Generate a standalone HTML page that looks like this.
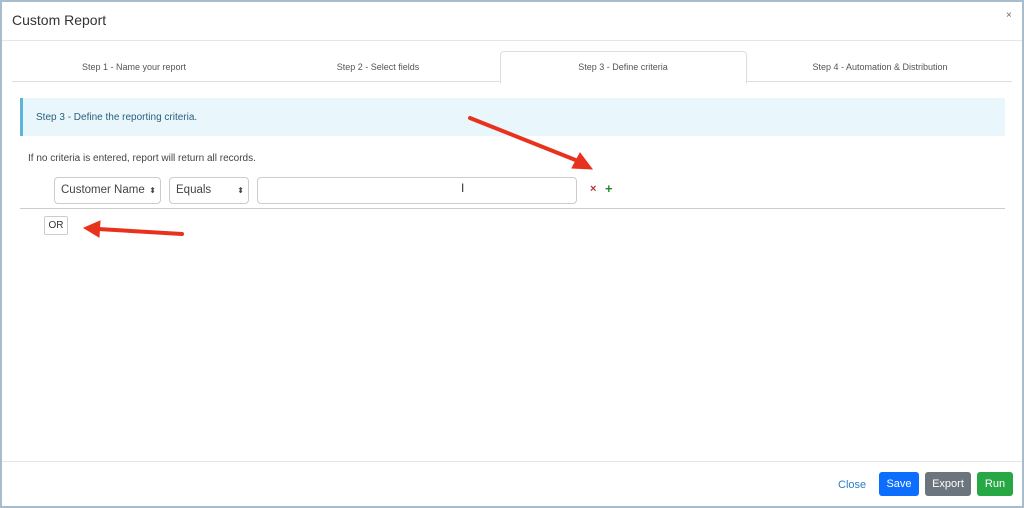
<!DOCTYPE html>
<html><head><style>
body{margin:0;width:1024px;height:508px;background:#a9bccb;font-family:"Liberation Sans",sans-serif;position:relative;overflow:hidden}
.m{position:absolute;left:2px;top:2px;width:1020px;height:504px;background:#fff}
.a{position:absolute}
.t{font-size:9px;color:#555;text-align:center;top:62px}
.btn{position:absolute;top:472px;height:24px;border-radius:3px;color:#fff;font-size:11px;line-height:25px;text-align:center}
</style></head><body>
<div class="m"></div>
<div class="a" style="left:12px;top:12px;font-size:14px;color:#333">Custom Report</div>
<div class="a" style="left:1006px;top:10px;font-size:10px;color:#666">×</div>
<div class="a" style="left:2px;top:40px;width:1020px;height:1px;background:#e5e5e5"></div>
<div class="a" style="left:12px;top:81px;width:1000px;height:1px;background:#ddd"></div>
<div class="a" style="left:500px;top:51px;width:245px;height:31px;border:1px solid #ddd;border-bottom:1px solid #fff;border-radius:4px 4px 0 0;background:#fff"></div>
<div class="a t" style="left:12px;width:244px">Step 1 - Name your report</div>
<div class="a t" style="left:256px;width:244px">Step 2 - Select fields</div>
<div class="a t" style="left:500px;width:246px">Step 3 - Define criteria</div>
<div class="a t" style="left:746px;width:268px">Step 4 - Automation &amp; Distribution</div>
<div class="a" style="left:20px;top:98px;width:982px;height:38px;background:#e9f6fb;border-left:3px solid #5bb6d8"></div>
<div class="a" style="left:36px;top:112px;font-size:10px;color:#2c5f7c">Step 3 - Define the reporting criteria.</div>
<div class="a" style="left:28px;top:153px;font-size:10px;color:#444">If no criteria is entered, report will return all records.</div>
<div class="a" style="left:54px;top:177px;width:105px;height:25px;border:1px solid #ccc;border-radius:4px;font-size:11.5px;line-height:25px;color:#444;text-indent:6px">Customer Name<span style="position:absolute;right:4px;font-size:8px">⬍</span></div>
<div class="a" style="left:169px;top:177px;width:78px;height:25px;border:1px solid #ccc;border-radius:4px;font-size:11.5px;line-height:25px;color:#444;text-indent:6px">Equals<span style="position:absolute;right:4px;font-size:8px">⬍</span></div>
<div class="a" style="left:257px;top:177px;width:318px;height:25px;border:1px solid #ccc;border-radius:4px"></div>
<div class="a" style="left:461px;top:181px;font-size:12px;color:#333">I</div>
<div class="a" style="left:590px;top:183px;font-size:11px;color:#b33;font-weight:bold">×</div>
<div class="a" style="left:605px;top:181px;font-size:13px;color:#2a8a2a;font-weight:bold">+</div>
<div class="a" style="left:20px;top:208px;width:985px;height:1px;background:#ccc"></div>
<div class="a" style="left:44px;top:216px;width:22px;height:17px;border:1px solid #ccc;border-radius:2px;font-size:10px;line-height:17px;text-align:center;color:#333">OR</div>
<div class="a" style="left:2px;top:461px;width:1020px;height:1px;background:#e5e5e5"></div>
<div class="a" style="left:838px;top:479px;font-size:11px;color:#2a7bc8">Close</div>
<div class="btn" style="left:879px;width:40px;background:#0d6efd">Save</div>
<div class="btn" style="left:925px;width:46px;background:#6c757d">Export</div>
<div class="btn" style="left:977px;width:36px;background:#28a745">Run</div>
<svg class="a" style="left:0;top:0" width="1024" height="508">
<g fill="#e8321e" stroke="#e8321e">
<line x1="470" y1="118" x2="578" y2="161" stroke-width="4" stroke-linecap="round"/>
<polygon points="592,169 572,168 580,153" stroke-width="1"/>
<line x1="182" y1="234" x2="98" y2="229" stroke-width="4" stroke-linecap="round"/>
<polygon points="84,228 100,221 99,237" stroke-width="1"/>
</g></svg>
</body></html>
